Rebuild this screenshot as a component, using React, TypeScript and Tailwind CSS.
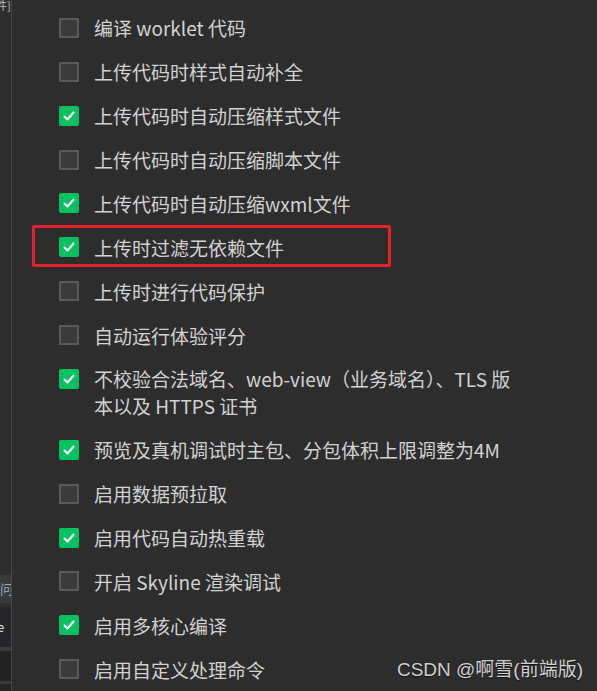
import React from "react";

interface Option {
  label: React.ReactNode;
  checked: boolean;
  highlight?: boolean;
}

const OPTIONS: Option[] = [
  { label: "编译 worklet 代码", checked: false },
  { label: "上传代码时样式自动补全", checked: false },
  { label: "上传代码时自动压缩样式文件", checked: true },
  { label: "上传代码时自动压缩脚本文件", checked: false },
  { label: "上传代码时自动压缩wxml文件", checked: true },
  { label: "上传时过滤无依赖文件", checked: true, highlight: true },
  { label: "上传时进行代码保护", checked: false },
  { label: "自动运行体验评分", checked: false },
  {
    label: (
      <>
        不校验合法域名、web-view（业务域名）、TLS 版
        <br />
        本以及 HTTPS 证书
      </>
    ),
    checked: true,
  },
  { label: "预览及真机调试时主包、分包体积上限调整为4M", checked: true },
  { label: "启用数据预拉取", checked: false },
  { label: "启用代码自动热重载", checked: true },
  { label: "开启 Skyline 渲染调试", checked: false },
  { label: "启用多核心编译", checked: true },
  { label: "启用自定义处理命令", checked: false },
];

function Checkbox({ checked }: { checked: boolean }) {
  if (checked) {
    return (
      <div className="w-[20px] h-[20px] rounded-[2px] bg-[#07c160] flex items-center justify-center">
        <svg width="14" height="14" viewBox="0 0 14 14" fill="none">
          <path d="M2.5 7.5 L5.5 10.5 L11.5 3.5" stroke="#ffffff" strokeWidth="2" strokeLinecap="round" strokeLinejoin="round" />
        </svg>
      </div>
    );
  }
  return <div className="w-[20px] h-[20px] rounded-[1px] border-2 border-[#5a5a5a] bg-[#3b3b3b]" />;
}

export default function App() {
  return (
    <div
      className="w-[597px] h-[691px] overflow-hidden bg-[#2d2d2d] flex relative"
      style={{ fontFamily: '"Noto Sans CJK SC", "Noto Sans", sans-serif' }}
    >
      {/* left panel edge */}
      <div className="w-[12px] shrink-0 border-r border-[#474747] flex flex-col overflow-hidden">
        <div className="h-[14px] text-[11px] leading-[10px] text-[#bdbdbd] whitespace-nowrap -ml-[4px]">件]</div>
        <div className="h-[561px]" />
        <div className="h-[28px] bg-[#3a3a3a] text-[13px] leading-[28px] text-[#9ab] whitespace-nowrap">问</div>
        <div className="h-[4px] bg-[#2f2f2f]" />
        <div className="h-[40px] bg-[#24262a] text-[13px] leading-[40px] text-[#e8e8e8] whitespace-nowrap -ml-[3px]">e</div>
        <div className="h-[4px] bg-[#3a3a3a]" />
        <div className="h-[30px] bg-[#232323]" />
        <div className="h-[3px] bg-[#3a3a3a]" />
        <div className="flex-1 bg-[#262626]" />
      </div>

      <div className="flex-1 pt-[6px] pl-[47px]">
        {OPTIONS.map((opt, i) => (
          <div key={i} className="relative flex items-start gap-[15px] py-[8.45px]">
            <div className="h-[27px] flex items-center">
              <Checkbox checked={opt.checked} />
            </div>
            <div className="text-[19px] leading-[27px] text-[#d2d2d2] whitespace-nowrap">{opt.label}</div>
            {opt.highlight && (
              <div className="absolute left-[-27px] top-0 w-[359px] h-[42px] border-[3px] border-[#e5222b] rounded-[2px]" />
            )}
          </div>
        ))}
      </div>

      <div
        className="absolute right-[14px] bottom-[9px] text-[19px] leading-[24px] text-[#cfcfcf] [text-shadow:0_1px_1px_rgba(0,0,0,0.6)]"
        style={{ fontFamily: '"Liberation Sans", "Noto Sans CJK SC", sans-serif' }}
      >
        CSDN @啊雪(前端版)
      </div>
    </div>
  );
}
